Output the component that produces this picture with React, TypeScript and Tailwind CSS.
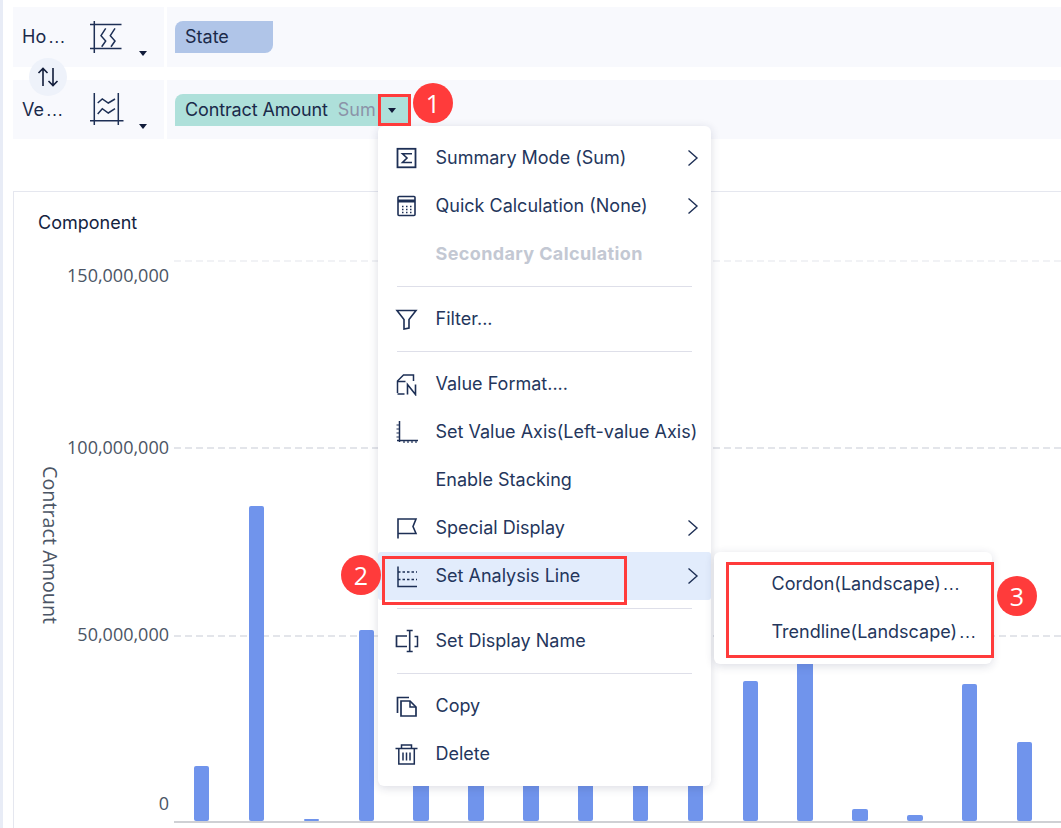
import React from "react";

const INK = "#1d2f55";

function Svg({ children, size = 24, className = "" }: { children: React.ReactNode; size?: number; className?: string }) {
  return (
    <svg width={size} height={size} viewBox="0 0 24 24" fill="none" stroke={INK} strokeWidth="1.5" className={className}>
      {children}
    </svg>
  );
}

const Icons: Record<string, React.ReactNode> = {
  sigma: (
    <Svg>
      <rect x="2.5" y="2.8" width="18" height="18.5" strokeWidth="1.800" />
      <path d="M17 7.800H7.500l4.500 4.200-4.500 4.500H17" strokeWidth="1.600" />
    </Svg>
  ),
  calc: (
    <Svg>
      <rect x="3" y="2.500" width="17" height="19" rx="1" strokeWidth="1.600" />
      <path d="M3 7h17" strokeWidth="3" />
      <path d="M7 12.500h1.500M11 12.500h1.500M15 12.500h1.500M7 15.500h1.500M11 15.500h1.500M15 15.500h1.500M7 18.500h1.500M11 18.500h1.500M15 18.500h1.500" strokeWidth="1.500" />
    </Svg>
  ),
  filter: (
    <Svg>
      <path d="M2 3.500h19l-7 9v8.500l-5 1v-9.500z" strokeWidth="1.600" />
    </Svg>
  ),
  format: (
    <Svg>
      <path d="M2.500 21V9l6-6h10v6" strokeWidth="1.500" />
      <path d="M2.500 9.500h8M2.500 22h7" strokeWidth="1.500" />
      <path d="M12.500 22.500v-10l8 10v-10" strokeWidth="1.600" />
    </Svg>
  ),
  axis: (
    <Svg>
      <path d="M4.500 1v21M2 20.500h21" strokeWidth="1.500" />
      <path d="M1.500 5h3M1.500 9h3M1.500 13h3M1.500 17h3M9 20.500v2.500M13 20.500v2.500M17 20.500v2.500M21 20.500v2.500" strokeWidth="1.200" />
    </Svg>
  ),
  flag: (
    <Svg>
      <path d="M3 22.500V3h18l-3 7.500 3 7H3" strokeWidth="1.600" />
    </Svg>
  ),
  analysis: (
    <Svg>
      <path d="M3 2.500v20h19" strokeWidth="1.500" />
      <path d="M3 8h19M3 15.500h19" strokeWidth="1.500" strokeDasharray="2.500 2" />
    </Svg>
  ),
  rename: (
    <Svg>
      <path d="M12 7H1.500v10.500H12" strokeWidth="1.700" />
      <path d="M19.500 7.500h3v10h-3" strokeWidth="1.500" />
      <path d="M11.700 1.500h6M14.700 1.500v21M11.700 22.500h6" strokeWidth="1.600" />
    </Svg>
  ),
  copy: (
    <Svg>
      <path d="M2.500 19V3.500H14" strokeWidth="1.700" />
      <path d="M6 22V7h9l6 6v9z" strokeWidth="1.700" />
      <path d="M15 7v6h6" strokeWidth="1.500" />
    </Svg>
  ),
  trash: (
    <Svg>
      <path d="M.5 6.500h22M6.500 6V3h10v3" strokeWidth="1.500" />
      <path d="M3.800 6.500v15.500h15.500V6.500M8 10.500v8M11.500 10.500v8M15 10.500v8" strokeWidth="1.500" />
    </Svg>
  ),
};

function Chevron() {
  return (
    <svg width="12" height="18" viewBox="0 0 12 18" fill="none" stroke={INK} strokeWidth="1.400" className="ml-auto">
      <path d="M1.500 1.500 10 9l-8.500 7.500" />
    </svg>
  );
}

function Caret({ className = "" }: { className?: string }) {
  return <span className={`block h-0 w-0 border-x-[4px] border-t-[5px] border-x-transparent border-t-[#111c3a] ${className}`} />;
}

function Item({ icon, label, arrow, active, disabled }: { icon?: string; label: string; arrow?: boolean; active?: boolean; disabled?: boolean }) {
  return (
    <div className={`flex h-12 items-center pl-[17px] pr-[12px] ${active ? "rounded-[3px] bg-[#e2ecfc]" : ""}`}>
      <span className="flex w-[24px] shrink-0 items-center justify-center">{icon ? Icons[icon] : null}</span>
      <span className={`ml-[16.5px] whitespace-nowrap text-[18px] leading-6 ${disabled ? "font-bold tracking-[0.38px] text-[#c3c8d3]" : "text-[#24365c]"}`}>{label}</span>
      {arrow ? <Chevron /> : null}
    </div>
  );
}

function Divider() {
  return <div className="mx-[19px] my-[8px] h-px bg-[#dedfe9]" />;
}

function Badge({ n, className }: { n: number; className: string }) {
  return (
    <div className={`absolute flex h-10 w-10 items-center justify-center rounded-full bg-[#ff3b3b] font-['Open_Sans',sans-serif] text-[25px] leading-none text-white ${className}`}>{n}</div>
  );
}

function Dots() {
  return <span className="ml-[1.5px] font-['Liberation_Sans',sans-serif]">…</span>;
}

const bars = [55, 315, 2, 191, 70, 130, 90, 150, 110, 60, 140, 171, 12, 6, 137, 79];
const barHeights: Record<number, string> = {
  55: "h-[55px]", 315: "h-[315px]", 2: "h-[2px]", 191: "h-[191px]", 70: "h-[70px]", 130: "h-[130px]", 90: "h-[90px]", 150: "h-[150px]", 110: "h-[110px]", 60: "h-[60px]", 140: "h-[140px]", 171: "h-[171px]", 12: "h-[12px]", 6: "h-[6px]", 137: "h-[137px]", 79: "h-[79px]",
};

export default function App() {
  return (
    <div className="relative h-[828px] w-[1061px] overflow-hidden border-l-[3px] border-[#e8ecf6] bg-white pl-[10px] pt-[7px] font-['Inter','Liberation_Sans',sans-serif] text-[18px] text-[#1b2a4a]">
      {/* Horizontal shelf */}
      <div className="flex h-[60px] bg-[#f8f9fd]">
        <div className="flex w-[151px] shrink-0 pl-[9px]">
          <span className="mt-[18px] w-[68px] leading-6">Ho<Dots /></span>
          <svg width="34" height="34" viewBox="0 0 34 34" fill="none" stroke={INK} strokeWidth="1.500" className="mt-[13px]">
            <path d="M4.300 1v32M0 4.500h31.500M0 28.500h31.500" />
            <path d="M15.700 8.300 11 15.700l4.700 5.300-4 5.700M25 8.300l-4.700 7.400 4.700 5.300-4 5.700" />
          </svg>
          <Caret className="ml-[15px] mt-[44px]" />
        </div>
        <div className="w-[3px] bg-white" />
        <div className="pl-[8px] pt-[14px]">
          <div className="flex h-[32px] w-[98px] items-center rounded-tl-lg rounded-br-lg bg-[#b0c5e8] pl-[10px] leading-6">State</div>
        </div>
      </div>
      {/* Vertical shelf */}
      <div className="mt-[13px] flex h-[59px] bg-[#f8f9fd]">
        <div className="flex w-[151px] shrink-0 pl-[9px]">
          <span className="mt-[18px] w-[68px] leading-6">Ve<Dots /></span>
          <svg width="34" height="34" viewBox="0 0 34 34" fill="none" stroke={INK} strokeWidth="1.500" className="mt-[13px]">
            <path d="M4.300 0v32M28.300 0v32M0 27.700h33.500" />
            <path d="M7.700 10l4.600-4 6 4 6.700-4M7.700 21l4.600-5.300 6 4.300 6.700-4.300" />
          </svg>
          <Caret className="ml-[15px] mt-[44px]" />
        </div>
        <div className="w-[3px] bg-white" />
        <div className="pl-[8px] pt-[14px]">
          <div className="flex h-[32px] w-[234px] items-center overflow-hidden rounded-tl-lg bg-[#aee0da] pl-[10px] leading-6">
            <span className="whitespace-nowrap tracking-[-0.13px]">Contract Amount</span>
            <span className="ml-[10px] w-[40px] shrink-0 overflow-hidden whitespace-nowrap text-[#8b93a8]">Sum</span>
            <Caret className="ml-[10px]" />
          </div>
        </div>
      </div>

      {/* Chart card */}
      <div className="mt-[52px] h-[700px] border-l border-t border-[#e5e7ef] pl-[24px] pt-[19px]">
        <div className="h-[24px] leading-6 text-[#14233f]">Component</div>
        <div className="flex h-[588px]">
          <div className="w-[24px] shrink-0 pt-[231px]">
            <span className="block whitespace-nowrap font-['Open_Sans',sans-serif] text-[19.75px] leading-6 text-[#4b5565] [writing-mode:vertical-rl]">Contract Amount</span>
          </div>
          <div className="flex w-[107px] shrink-0 flex-col items-end font-['Open_Sans',sans-serif] text-[18px] leading-6 text-[#4b5565]">
            <span className="mt-[28px]">150,000,000</span>
            <span className="mt-[148px]">100,000,000</span>
            <span className="mt-[163px]">50,000,000</span>
            <span className="mt-[145px]">0</span>
          </div>
          <div className="relative ml-[5px] flex-1">
            <div className="absolute inset-0 flex flex-col">
              <div className="mt-[25px] h-[2px] bg-[repeating-linear-gradient(90deg,#f1f2f5_0_7px,transparent_7px_11px)]" />
              <div className="mt-[185px] h-[2px] bg-[repeating-linear-gradient(90deg,#e3e5ea_0_7px,transparent_7px_11px)]" />
              <div className="mt-[186px] h-[2px] bg-[repeating-linear-gradient(90deg,#e3e5ea_0_7px,transparent_7px_11px)]" />
            </div>
            <div className="absolute inset-0 flex items-end gap-[39.47px] border-b-2 border-[#cfd0d4] pl-[20px]">
              {bars.map((h, i) => (
                <div key={i} className={`w-[15.4px] shrink-0 rounded-[2px] bg-[#7094ec] ${barHeights[h]}`} />
              ))}
            </div>
          </div>
        </div>
      </div>

      {/* Swap button */}
      <div className="absolute left-[26px] top-[58px] flex h-[38px] w-[38px] items-center justify-center rounded-full bg-[#eef2fa]">
        <svg width="22" height="22" viewBox="0 0 22 22" fill="none" stroke="#111c3a" strokeWidth="1.600">
          <path d="M6 20V2.500M1.500 7 6 2.500 10.500 7M16 2v17.500M11.500 15l4.500 4.500 4.500-4.500" />
        </svg>
      </div>

      {/* Main menu */}
      <div className="absolute left-[375px] top-[126px] w-[333px] rounded-md bg-white py-[8px] shadow-[0_2px_10px_rgba(30,40,80,0.16)]">
        <Item icon="sigma" label="Summary Mode (Sum)" arrow />
        <Item icon="calc" label="Quick Calculation (None)" arrow />
        <Item label="Secondary Calculation" disabled />
        <Divider />
        <Item icon="filter" label="Filter..." />
        <Divider />
        <Item icon="format" label="Value Format...." />
        <Item icon="axis" label="Set Value Axis(Left-value Axis)" />
        <Item label="Enable Stacking" />
        <Item icon="flag" label="Special Display" arrow />
        <Item icon="analysis" label="Set Analysis Line" arrow active />
        <Divider />
        <Item icon="rename" label="Set Display Name" />
        <Divider />
        <Item icon="copy" label="Copy" />
        <Item icon="trash" label="Delete" />
      </div>

      {/* Submenu */}
      <div className="absolute left-[711px] top-[552px] w-[278px] rounded-md bg-white py-[8px] pl-[57.5px] shadow-[0_2px_10px_rgba(30,40,80,0.16)]">
        <div className="flex h-12 items-center whitespace-nowrap leading-6 text-[#24365c]">Cordon(Landscape)<Dots /></div>
        <div className="flex h-12 items-center whitespace-nowrap leading-6 text-[#24365c]">Trendline(Landscape)<Dots /></div>
      </div>

      {/* Annotations */}
      <div className="absolute left-[375px] top-[94px] h-[32px] w-[33px] border-[3px] border-[#ff3b3b]" />
      <div className="absolute left-[379px] top-[556px] h-[49px] w-[245px] border-[3px] border-[#ff3b3b]" />
      <div className="absolute left-[723px] top-[562px] h-[96px] w-[268px] border-[3px] border-[#ff3b3b]" />
      <Badge n={1} className="left-[410px] top-[83px]" />
      <Badge n={2} className="left-[338px] top-[555px]" />
      <Badge n={3} className="left-[994px] top-[576px]" />
    </div>
  );
}
